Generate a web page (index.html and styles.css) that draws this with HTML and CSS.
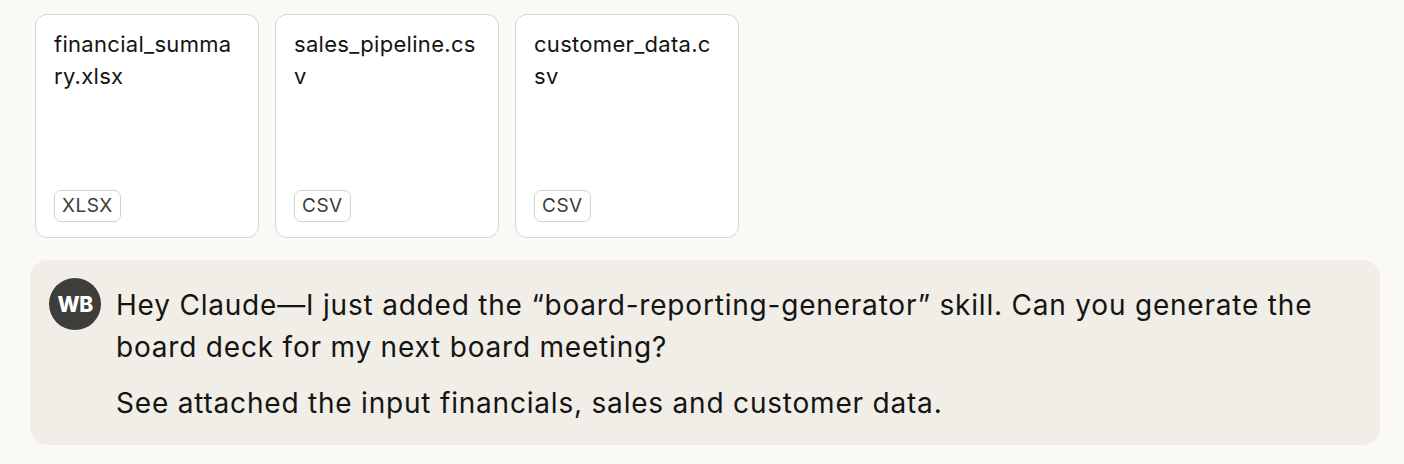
FILE: index.html
```html
<!DOCTYPE html>
<html lang="en">
<head>
<meta charset="utf-8">
<title>Chat</title>
<link rel="stylesheet" href="styles.css">
</head>
<body>
<main class="thread">
  <div class="files">
    <div class="file-card">
      <div class="file-name">financial_summary.xlsx</div>
      <span class="file-type">XLSX</span>
    </div>
    <div class="file-card">
      <div class="file-name">sales_pipeline.csv</div>
      <span class="file-type">CSV</span>
    </div>
    <div class="file-card">
      <div class="file-name">customer_data.csv</div>
      <span class="file-type">CSV</span>
    </div>
  </div>
  <div class="message">
    <div class="avatar">WB</div>
    <div class="message-body">
      <p>Hey Claude—I just added the “board-reporting-generator” skill. Can you generate the board deck for my next board meeting?</p>
      <p>See attached the input financials, sales and customer data.</p>
    </div>
  </div>
</main>
</body>
</html>
```
FILE: styles.css
```css
html, body {
  margin: 0;
  padding: 0;
  background: #faf9f5;
  color: #141413;
  font-family: Inter, "Open Sans", sans-serif;
}

.thread {
  padding: 14px 24px 0 30px;
  display: flex;
  flex-direction: column;
  gap: 22px;
}

.files {
  display: flex;
  gap: 16px;
  padding-left: 5px;
}

.file-card {
  box-sizing: border-box;
  width: 224px;
  height: 224px;
  background: #ffffff;
  border: 1px solid #d9d7d0;
  border-radius: 12px;
  padding: 13px 18px 15px 18px;
  display: flex;
  flex-direction: column;
  justify-content: space-between;
  align-items: flex-start;
}

.file-name {
  width: 182px;
  font-size: 22px;
  letter-spacing: 0.3px;
  line-height: 32px;
  word-break: break-all;
  color: #141413;
}

.file-type {
  box-sizing: border-box;
  height: 32px;
  padding: 0 7px;
  border: 1px solid #d4d2cb;
  border-radius: 7px;
  font-size: 19px;
  letter-spacing: 0.5px;
  line-height: 30px;
  color: #3d3d3a;
}

.message {
  box-sizing: border-box;
  width: 1350px;
  background: #f0eee6;
  border-radius: 18px;
  padding: 18px 20px 21px 19px;
  display: flex;
  gap: 15px;
  align-items: flex-start;
}

.avatar {
  flex: none;
  width: 52px;
  height: 52px;
  border-radius: 50%;
  background: #3d3d3a;
  color: #ffffff;
  font-weight: 800;
  font-size: 21px;
  letter-spacing: -0.5px;
  display: flex;
  align-items: center;
  justify-content: center;
}

.message-body {
  padding-top: 6px;
  font-size: 28px;
  letter-spacing: 0.8px;
  line-height: 42px;
}

.message-body p {
  margin: 0 0 14px 0;
}

.message-body p:last-child {
  margin-bottom: 0;
}
```
